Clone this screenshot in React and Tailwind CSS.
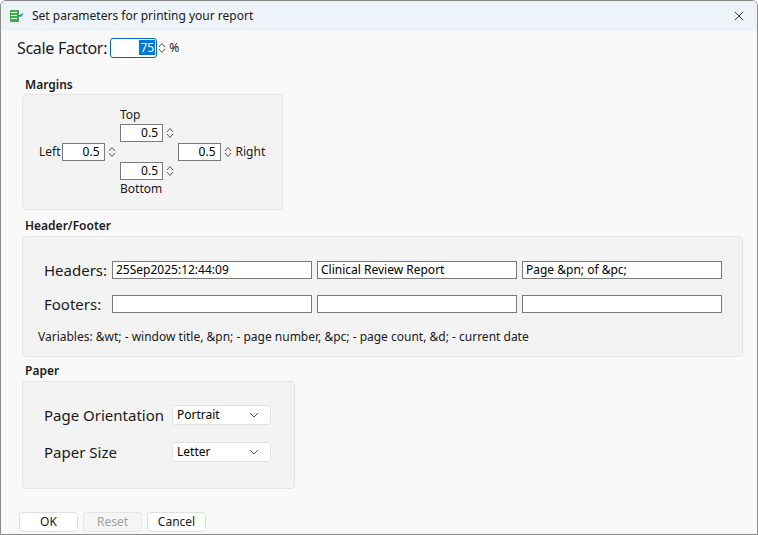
import { X } from "lucide-react";

const font = { fontFamily: '"Segoe UI", "Noto Sans", "Open Sans", sans-serif' };

function Spin() {
  return (
    <div className="flex flex-col items-center justify-center w-[10px] h-[18px] text-[#555]">
      <svg width="8" height="6" viewBox="0 0 8 6"><path d="M1 5 L4 1.5 L7 5" fill="none" stroke="currentColor" strokeWidth="1" /></svg>
      <svg width="8" height="6" viewBox="0 0 8 6"><path d="M1 1 L4 4.5 L7 1" fill="none" stroke="currentColor" strokeWidth="1" /></svg>
    </div>
  );
}

function Num({ v }) {
  return (
    <div className="flex items-center gap-[2px]">
      <div className="w-[43px] h-[18px] bg-white border border-[#7a7a7a] text-right pr-[4px] text-[12px] leading-[16px] text-black">{v}</div>
      <Spin />
    </div>
  );
}

function Field({ v }) {
  return <div className="w-[200px] h-[18px] bg-white border border-[#7a7a7a] px-[3px] text-[12px] leading-[16px] text-black">{v}</div>;
}

function Select({ v }) {
  return (
    <div className="w-[99px] h-[20px] bg-white border border-[#e3e3e3] rounded-[3px] flex items-center justify-between px-[4px] text-[12px] text-black">
      <span>{v}</span>
      <svg width="10" height="6" viewBox="0 0 10 6" className="mr-[7px]"><path d="M1 1 L5 5 L9 1" fill="none" stroke="#555" strokeWidth="1" /></svg>
    </div>
  );
}

export default function App() {
  return (
    <div style={font} className="w-[758px] h-[535px] bg-[#f9f9f9] border border-[#8a8a8a] rounded-t-[6px] overflow-hidden text-[#1a1a1a] flex flex-col">
      <div className="h-[30px] bg-[#eef3f9] flex items-center pl-[8px] pr-[10px]">
        <svg width="16" height="14" viewBox="0 0 16 14">
          <rect x="1" y="1" width="9" height="12" fill="#3cb043" />
          <rect x="2" y="3" width="6" height="1" fill="#fff" />
          <rect x="2" y="6" width="6" height="1" fill="#fff" />
          <rect x="2" y="9" width="6" height="1" fill="#fff" />
          <path d="M8 7 L15 4 L12 8 Z" fill="#1e88e5" />
        </svg>
        <span className="ml-[7px] text-[12px]">Set parameters for printing your report</span>
        <X className="ml-auto" size={16} strokeWidth={1.3} />
      </div>

      <div className="flex items-center mt-[7px] pl-[16px] h-[19px]">
        <span className="text-[16px] tracking-[-0.3px]">Scale Factor:</span>
        <div className="ml-[3px] w-[47px] h-[20px] border border-[#0067c0] rounded-[3px] bg-white flex justify-end items-center pr-[1px]">
          <span className="bg-[#0078d7] text-white text-[12px] leading-[15px] px-[1px]">75</span>
        </div>
        <Spin />
        <span className="ml-[2px] text-[12px]">%</span>
      </div>

      <div className="ml-[24px] mt-[21px] text-[12px] font-semibold leading-[14px]">Margins</div>
      <div className="ml-[21px] mt-[2px] w-[261px] h-[116px] bg-[#f3f3f3] border border-[#e5e5e5] rounded-[4px] text-[12px] flex flex-col items-start pl-[16px] pt-[13px]">
        <div className="ml-[81px] leading-[14px]">Top</div>
        <div className="ml-[81px] mt-[2px]"><Num v="0.5" /></div>
        <div className="flex items-center mt-[1px]">
          <span className="mr-[1px]">Left</span>
          <Num v="0.5" />
          <div className="ml-[61px]"><Num v="0.5" /></div>
          <span className="ml-[3px]">Right</span>
        </div>
        <div className="ml-[81px] mt-[1px]"><Num v="0.5" /></div>
        <div className="ml-[81px] mt-[2px] leading-[14px]">Bottom</div>
      </div>

      <div className="ml-[24px] mt-[9px] text-[12px] font-semibold leading-[14px]">Header/Footer</div>
      <div className="ml-[21px] mt-[3px] w-[721px] h-[121px] bg-[#f3f3f3] border border-[#e5e5e5] rounded-[4px] pt-[24px]">
        <div className="flex items-center h-[18px]">
          <span className="ml-[21px] w-[68px] text-[15px] leading-[18px]">Headers:</span>
          <div className="flex gap-[5px]"><Field v="25Sep2025:12:44:09" /><Field v="Clinical Review Report" /><Field v="Page &pn; of &pc;" /></div>
        </div>
        <div className="flex items-center h-[18px] mt-[16px]">
          <span className="ml-[21px] w-[68px] text-[15px] leading-[18px]">Footers:</span>
          <div className="flex gap-[5px]"><Field v="" /><Field v="" /><Field v="" /></div>
        </div>
        <div className="ml-[15px] mt-[17px] text-[12px] leading-[14px]">Variables: &amp;wt; - window title, &amp;pn; - page number, &amp;pc; - page count, &amp;d; - current date</div>
      </div>

      <div className="ml-[24px] mt-[7px] text-[12px] font-semibold leading-[14px]">Paper</div>
      <div className="ml-[21px] mt-[3px] w-[273px] h-[108px] bg-[#f3f3f3] border border-[#e5e5e5] rounded-[4px] pt-[23px] pl-[21px]">
        <div className="flex items-center h-[20px]">
          <span className="w-[128px] text-[15px] leading-[18px]">Page Orientation</span>
          <Select v="Portrait" />
        </div>
        <div className="flex items-center h-[20px] mt-[17px]">
          <span className="w-[128px] text-[15px] leading-[18px]">Paper Size</span>
          <Select v="Letter" />
        </div>
      </div>

      <div className="flex gap-[5px] ml-[18px] mt-[23px] text-[12px]">
        <div className="w-[59px] h-[20px] bg-white border border-[#e0e0e0] rounded-[3px] flex items-center justify-center">OK</div>
        <div className="w-[59px] h-[20px] bg-[#f5f5f5] border border-[#e5e5e5] rounded-[3px] flex items-center justify-center text-[#a0a0a0]">Reset</div>
        <div className="w-[59px] h-[20px] bg-white border border-[#e0e0e0] rounded-[3px] flex items-center justify-center">Cancel</div>
      </div>
    </div>
  );
}
